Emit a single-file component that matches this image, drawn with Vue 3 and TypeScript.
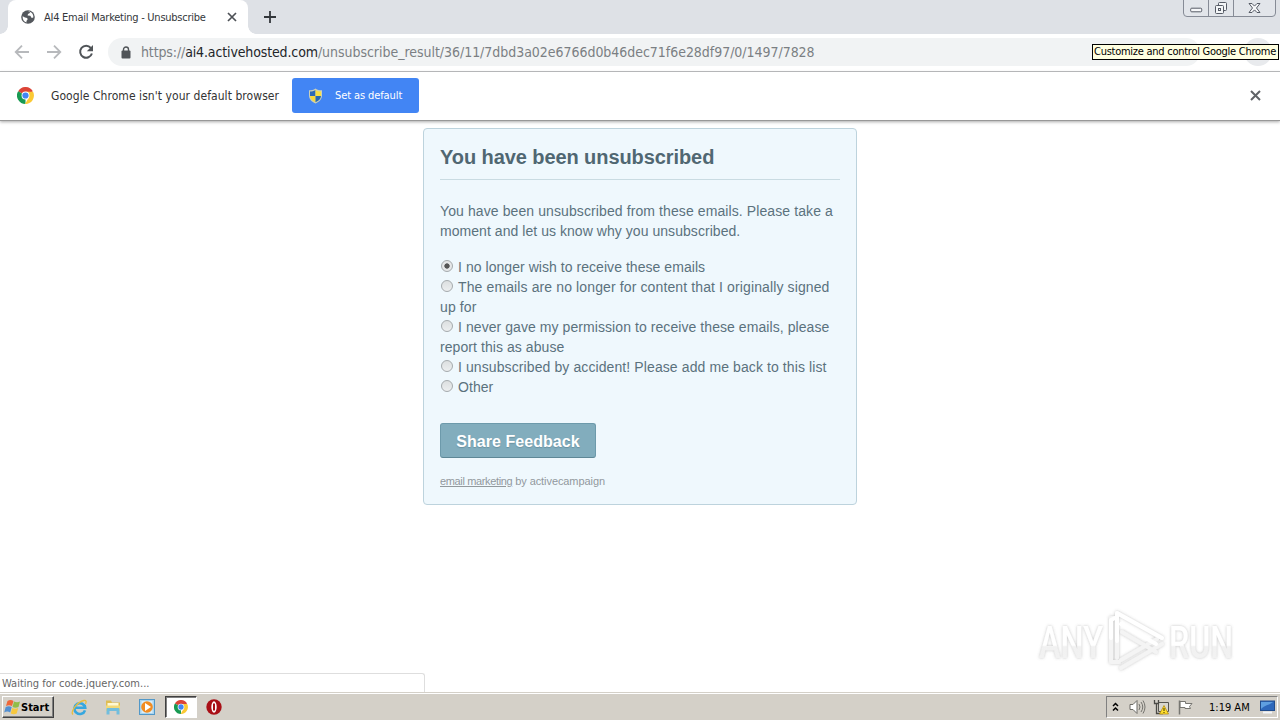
<script setup lang="ts">
import { ref } from 'vue'

interface Reason {
  id: string
  lines: string[]
}

const reasons: Reason[] = [
  { id: 'wish', lines: ['I no longer wish to receive these emails'] },
  { id: 'content', lines: ['The emails are no longer for content that I originally signed', 'up for'] },
  { id: 'permission', lines: ['I never gave my permission to receive these emails, please', 'report this as abuse'] },
  { id: 'accident', lines: ['I unsubscribed by accident! Please add me back to this list'] },
  { id: 'other', lines: ['Other'] },
]

const selected = ref('wish')
</script>

<template>
  <div class="screen">
    <header class="tabstrip">
      <div class="tab">
        <svg class="globe" width="14" height="14" viewBox="0 0 14 14">
          <circle cx="7" cy="7" r="6.8" fill="#54585d" />
          <path d="M1.6 6.2 4 7.4 6.2 8l.4 1.5L5.4 11l.2 1.5C3.1 12 1.4 9.6 1.6 6.2zM6 1.6h3L8.8 3 7 4 6.6 5.6l2.7.1L10.7 8l1.6-.4C12.8 4.3 10.3 1.3 6 1.6z" fill="#fff" />
        </svg>
        <span class="tab-title">AI4 Email Marketing - Unsubscribe</span>
        <svg class="tab-close" width="10" height="10" viewBox="0 0 10 10"><path d="M1 1l8 8M9 1L1 9" stroke="#4d5156" stroke-width="1.7" /></svg>
      </div>
      <svg class="new-tab" width="12" height="12" viewBox="0 0 12 12"><path d="M6 0v12M0 6h12" stroke="#33373b" stroke-width="1.8" /></svg>
      <div class="window-controls">
        <span class="control small">
          <svg width="13" height="6" viewBox="0 0 13 6"><rect x=".7" y="1.2" width="11" height="3.6" rx="1" fill="#f6f7f9" stroke="#565b66" /></svg>
        </span>
        <span class="control small">
          <svg width="14" height="14" viewBox="0 0 14 14" fill="#f3f5f7" stroke="#565b66"><rect x="4.5" y="1.5" width="8" height="8" rx="1" /><rect x="1.5" y="4.5" width="8" height="8" rx="1" /><rect x="4.5" y="7.5" width="2" height="2" /></svg>
        </span>
        <span class="control wide">
          <svg width="13" height="12" viewBox="0 0 13 12"><path d="M1 1.5h3l2.5 2.6L9 1.5h3L8.5 6l3.5 4.5H9L6.5 7.9 4 10.5H1L4.5 6z" fill="#f6f7f9" stroke="#565b66" /></svg>
        </span>
      </div>
    </header>

    <div class="toolbar">
      <svg class="nav back" width="16" height="16" viewBox="0 0 16 16" fill="none" stroke="#b7b9bc" stroke-width="1.8"><path d="M15 8H2M8 1.7 1.7 8 8 14.3" /></svg>
      <svg class="nav forward" width="16" height="16" viewBox="0 0 16 16" fill="none" stroke="#b7b9bc" stroke-width="1.8"><path d="M1 8h13M8 1.7 14.3 8 8 14.3" /></svg>
      <svg class="nav reload" width="16" height="16" viewBox="0 0 16 16"><path d="M12.8 3.9A6 6 0 1 0 13.9 9.5" fill="none" stroke="#505458" stroke-width="2" /><path d="M15 1v6.2H8.8z" fill="#505458" /></svg>
      <div class="omnibox">
        <svg class="lock" width="10" height="13" viewBox="0 0 10 13"><rect x=".5" y="4.5" width="9" height="8" rx="1" fill="#505458" /><path d="M2.5 5V3.5a2.5 2.5 0 0 1 5 0V5" fill="none" stroke="#505458" stroke-width="1.4" /></svg>
        <span class="url"><span class="scheme">https://</span><span class="host">ai4.activehosted.com</span><span class="path">/unsubscribe_result/36/11/7dbd3a02e6766d0b46dec71f6e28df97/0/1497/7828</span></span>
      </div>
      <span class="avatar"></span>
      <span class="menu-hover"></span>
      <div class="tooltip"><span>Customize and control Google Chrome</span></div>
    </div>

    <div class="infobar">
      <svg class="chrome-logo" width="17" height="17" viewBox="0 0 18 18">
        <path d="M9 9 1.2 4.5A9 9 0 0 1 16.8 4.5z" fill="#dc4437" />
        <path d="M9 9V18A9 9 0 0 1 1.2 4.5z" fill="#189a52" />
        <path d="M9 9V5h8A9 9 0 0 1 8.500 18L12.500 11z" fill="#fbc934" />
        <circle cx="9" cy="9" r="4.2" fill="#fff" /><circle cx="9" cy="9" r="3.3" fill="#4285f4" />
      </svg>
      <span class="info-text">Google Chrome isn't your default browser</span>
      <button class="default-button">
        <svg class="shield" width="15" height="16" viewBox="0 0 15 16">
          <path d="M7.5.5C5.5 2 3.5 2.3 1 2.3v5.2c0 3.5 2.6 6.3 6.5 8 3.9-1.7 6.5-4.5 6.5-8V2.3C11.5 2.3 9.5 2 7.5.5z" fill="#cbd0b9" />
          <path d="M7.5 2v6H2V3.5C4 3.5 5.5 3 7.5 2z" fill="#2d69b6" /><path d="M7.5 2c1.5 1 3.5 1.500 5.500 1.500V8H7.500z" fill="#f8df43" />
          <path d="M7.500 8v6.200C4.200 12.900 2.300 11 2 8z" fill="#f8d83b" /><path d="M7.500 8v6.200c3.300-1.300 5.200-3.200 5.500-6.200z" fill="#2868b1" />
        </svg>
        <span>Set as default</span>
      </button>
      <svg class="info-close" width="11" height="11" viewBox="0 0 11 11"><path d="M1 1l9 9M10 1l-9 9" stroke="#606367" stroke-width="2" /></svg>
    </div>

    <main class="page">
      <section class="card">
        <h1><span>You have been unsubscribed</span></h1>
        <p class="intro"><span class="intro-first">You have been unsubscribed from these emails. Please take a</span><br><span class="intro-second">moment and let us know why you unsubscribed.</span></p>
        <div class="reasons">
          <label v-for="reason in reasons" :key="reason.id" :class="reason.id">
            <input v-model="selected" type="radio" name="reason" :value="reason.id">
            <template v-for="(line, index) in reason.lines" :key="line"><br v-if="index"><span>{{ line }}</span></template>
          </label>
        </div>
        <button class="share"><span>Share Feedback</span></button>
        <div class="credit"><u>email marketing</u> by activecampaign</div>
      </section>

      <div class="watermark">
        <svg width="206" height="70" viewBox="0 0 206 70">
          <defs>
            <linearGradient id="fade" x1="0" y1="0" x2="0" y2="1"><stop offset="0" stop-color="#fff" /><stop offset=".55" stop-color="#fff" /><stop offset=".58" stop-color="#f1f1f1" /><stop offset="1" stop-color="#f3f3f3" /></linearGradient>
            <filter id="glow" x="-10%" y="-20%" width="120%" height="140%"><feDropShadow dx="0" dy="0" stdDeviation="1.5" flood-color="#777" flood-opacity=".45" /></filter>
          </defs>
          <g filter="url(#glow)" fill="url(#fade)">
            <text x="5" y="54" textLength="64" lengthAdjust="spacingAndGlyphs">ANY</text>
            <text x="135" y="54" textLength="64" lengthAdjust="spacingAndGlyphs">RUN</text>
          </g>
          <g fill="none" stroke-width="4" stroke-linejoin="round" stroke-linecap="round">
            <path d="M82 14h-5v44h8M83 54V9l45 25M88 28l34 20M87 64l41-24M87 56l36-21" stroke="#f4f4f4" filter="url(#glow)" />
            <path d="M77 34V16l4-2M83 37V9l45 25M87 20l35 20" stroke="#fff" />
          </g>
        </svg>
      </div>
      <div class="status"><span>Waiting for code.jquery.com...</span></div>
    </main>

    <footer class="taskbar">
      <button class="start">
        <svg width="17" height="16" viewBox="0 0 17 16"><path d="M3.5 2q3-2 6 0L8 7q-3-1.5-6 0z" fill="#ef6739" /><path d="M10 2.5q3 1.5 6 0L14.5 8q-3 1.5-6 0z" fill="#91bd48" /><path d="M1.7 8q3-1.5 6 0L6.200 13.500q-3-2-6 0z" fill="#528fd1" /><path d="M8.200 9q3 1.500 6 0l-1.500 5.500q-3 1.500-6 0z" fill="#f7c83f" /></svg>
        <span>Start</span>
      </button>
      <svg class="app-icon ie" width="17" height="17" viewBox="0 0 17 17"><path d="M14 11.300A5.400 5.400 0 1 1 14.200 8.800H4.500" fill="none" stroke="#36a7df" stroke-width="2.600" /><path d="M2 15.500C-1 13 6 3 13 1.500c2.500-.4 2.500 1.500 1.500 3.500" fill="none" stroke="#e9bd3d" stroke-width="1.300" /></svg>
      <svg class="app-icon folder" width="16" height="16" viewBox="0 0 16 16"><path d="M1 1.500h5l1 2h8V12H1z" fill="#dfbd52" /><path d="M2.500 4h11v4h-11z" fill="#fff8d2" /><path d="M1 6.500h14V12H1z" fill="#f2d978" /><path d="M1.500 15.500V10q0-1 1-1h11q1 0 1 1v5.500h-3V12h-7v3.500z" fill="#72bddd" /></svg>
      <svg class="app-icon player" width="16" height="16" viewBox="0 0 16 16"><rect x=".5" y=".5" width="15" height="15" fill="#a9d4ef" stroke="#5298c8" /><rect x="2.5" y="2" width="11" height="12" fill="#d9edf9" /><circle cx="8" cy="8" r="5.800" fill="#f18c22" /><path d="M6 4v8l6-4z" fill="#fff" /></svg>
      <div class="active-app">
        <svg width="14" height="14" viewBox="0 0 18 18"><path d="M9 9 1.200 4.500A9 9 0 0 1 16.800 4.500z" fill="#dc4437" /><path d="M9 9V18A9 9 0 0 1 1.200 4.500z" fill="#189a52" /><path d="M9 9V5h8A9 9 0 0 1 8.500 18L12.500 11z" fill="#fbc934" /><circle cx="9" cy="9" r="4.300" fill="#fff" /><circle cx="9" cy="9" r="3.400" fill="#4285f4" /></svg>
      </div>
      <svg class="app-icon opera" width="16" height="16" viewBox="0 0 16 16"><circle cx="8" cy="8" r="7.700" fill="#a90f16" /><ellipse cx="8" cy="8" rx="2.700" ry="5.700" fill="#fff" /><path d="M8 4.500v7" stroke="#a90f16" stroke-width="2" /></svg>
      <div class="tray">
        <svg class="chevrons" width="7" height="10" viewBox="0 0 7 10"><path d="M1 4l2.500-2.500L6 4M1 8.500 3.500 6 6 8.500" fill="none" stroke="#000" stroke-width="1.500" /></svg>
        <svg class="speaker" width="17" height="16" viewBox="0 0 17 16"><path d="M1 5.500h3l4-4v13l-4-4H1z" fill="#fff" stroke="#6c6b66" /><path d="M10 5q2 3 0 6M12 3q3.500 5 0 10M14 1.500q4 6.500 0 13" fill="none" stroke="#74736e" /></svg>
        <svg class="network" width="17" height="16" viewBox="0 0 17 16"><path d="M5.500 3.500h10v9h-10z" fill="#d8d6cf" stroke="#55544f" /><path d="M1.500 1v3.500h4V1M3.500 4v10.500H10" fill="none" stroke="#4b4a46" stroke-width="1.300" /><path d="M11 6.500 6.500 15h9z" fill="#ffdf2e" stroke="#ad8100" stroke-width=".7" /><path d="M11 9v3m0 1v1" stroke="#3b3000" /></svg>
        <svg class="flag" width="17" height="16" viewBox="0 0 17 16"><path d="M3 2.500h5.500v2h6.500l-2.500 3 1 2H8v-1H3z" fill="#fff" stroke="#777671" /><path d="M2.500 1.500v14" stroke="#777671" stroke-width="1.500" /></svg>
        <span class="clock">1:19 AM</span>
        <svg class="desktop" width="15" height="14" viewBox="0 0 15 14"><rect x=".5" y="1" width="14" height="9.500" fill="#2e68bb" stroke="#224d8c" /><path d="M1 9V2h12C10 5 5 5 1 9z" fill="#5f9fe0" /><path d="M3 12.500h9" stroke="#f2f5f9" stroke-width="2" /></svg>
      </div>
    </footer>
  </div>
</template>

<style>
body { overflow: hidden; }
</style>

<style scoped>
* { box-sizing: border-box; }
.screen { width: 1280px; height: 720px; display: flex; flex-direction: column; background: #fff; font-family: "DejaVu Sans Condensed", "DejaVu Sans", sans-serif; font-stretch: condensed; white-space: nowrap; overflow: hidden; }
svg { flex-shrink: 0; display: block; }
button { font: inherit; margin: 0; }

.tabstrip { height: 34px; background: #dee1e6; display: flex; flex: none; align-items: flex-start; padding-left: 8px; }
.tab { position: relative; width: 240px; height: 34px; border-radius: 8px 8px 0 0; background: #fff; display: flex; align-items: center; padding-left: 13px; }
.tab::before, .tab::after { content: ""; position: absolute; bottom: 0; width: 8px; height: 8px; }
.tab::before { left: -8px; background: radial-gradient(circle at 0 0, transparent 7.5px, #fff 8px); }
.tab::after { right: -8px; background: radial-gradient(circle at 100% 0, transparent 7.5px, #fff 8px); }
.tab-title { width: 172px; margin-left: 9px; font-size: 11px; color: #34373b; letter-spacing: -.25px; }
.tab-close { margin-left: 11px; }
.new-tab { margin: 11px 0 0 16px; }
.window-controls { margin: -1px 4px 0 auto; height: 18px; display: flex; border: 1px solid #868b96; border-radius: 0 0 4px 4px; background: #e2e5ea; }
.control { display: flex; align-items: center; justify-content: center; border-right: 1px solid #868b96; }
.control.small { width: 25px; }
.control.small:first-child { padding-top: 4px; }
.control.wide { width: 41px; border-right: 0; }

.toolbar { position: relative; height: 38px; flex: none; border-bottom: 1px solid #b7b9bb; display: flex; align-items: center; padding: 0 0 1px 14px; }
.forward, .reload { margin-left: 16px; }
.omnibox { width: 1092px; height: 28px; margin-left: 14px; border-radius: 14px; display: flex; align-items: center; background: #f1f3f4; padding-left: 13px; }
.url { margin-left: 10px; font-size: 14px; line-height: 20px; color: #7b7f83; letter-spacing: -.035px; }
.scheme, .host { letter-spacing: -.13px; }
.host { color: #222529; }
.avatar { width: 16px; height: 16px; margin-left: 18px; border-radius: 50%; background: #6f7378; }
.menu-hover { width: 28px; height: 28px; margin-left: 10px; border-radius: 50%; background: #e8eaed; }
.tooltip { position: absolute; top: 10px; left: 1092px; width: 187px; height: 16px; padding-left: 1px; border: 1px solid #000; background: #ffffe1; color: #000; font-size: 11px; line-height: 14px; letter-spacing: -.26px; }

.infobar { position: relative; height: 49px; flex: none; border-bottom: 1px solid #989898; box-shadow: 0 1px 3px #aaa; display: flex; align-items: center; padding: 0 0 1px 17px; z-index: 1; background: #fff; }
.info-text { width: 241px; margin-left: 17px; font-size: 12px; color: #333; letter-spacing: .06px; }
.default-button { width: 127px; height: 35px; padding: 0 0 0 16px; border: 0; border-radius: 3px; background: #4285f4; color: #fff; display: flex; align-items: center; font-size: 11px; letter-spacing: -.1px; }
.default-button span { margin-left: 12px; }
.info-close { margin: 0 19px 0 auto; }

.page { position: relative; height: 571px; flex: none; padding-top: 7px; background: #fff; }
.card { width: 434px; height: 377px; margin: 0 auto; padding: 16px; background: #eff8fd; border: 1px solid #bdd3dd; border-radius: 4px; font-family: "Liberation Sans", Arial, sans-serif; color: #5b727d; font-size: 14px; line-height: 20px; }
h1 { height: 35px; margin: 0; border-bottom: 1px solid #c9dbe2; font-size: 20px; line-height: 24px; font-weight: 700; color: #506772; letter-spacing: -.08px; }
.intro { margin: 21px 0 16px; }
.intro-first { letter-spacing: .1px; }
.intro-second { letter-spacing: .05px; }
.reasons label { display: block; height: 20px; letter-spacing: .05px; }
.reasons .content, .reasons .permission { height: 40px; }
.reasons .content { letter-spacing: .12px; }
.reasons .permission { letter-spacing: .07px; }
.reasons .accident { letter-spacing: .1px; }
input { appearance: none; width: 12px; height: 12px; margin: 0 5px 0 1px; vertical-align: 0; border: 1px solid #a5aaad; border-radius: 50%; background: linear-gradient(#dcdfe0, #eceeef); }
input:checked { background: radial-gradient(circle, #555 0 2.3px, #e5e7e8 3px); }
.share { display: block; width: 156px; height: 35px; margin-top: 26px; padding: 2px 0 0; border: 1px solid #6d9aab; border-bottom-color: #5e8796; border-radius: 3px; background: #82adbd; color: #fff; font-weight: 700; font-size: 16px; letter-spacing: .05px; text-shadow: 0 1px 1px #6a91a0; }
.credit { margin-top: 13px; color: #92999d; font-size: 11px; letter-spacing: -.08px; }
.credit u { letter-spacing: -.36px; }
.watermark { position: absolute; left: 1034px; top: 483px; }
.watermark text { font: 500 45px "Roboto", sans-serif; }
.status { position: absolute; left: 0; bottom: 0; width: 425px; height: 19px; padding-left: 2px; border: 1px solid #dedede; border-left: 0; border-bottom: 0; border-radius: 0 3px 0 0; background: #fff; color: #666; font-size: 11px; line-height: 19px; }

.taskbar { height: 28px; flex: none; display: flex; align-items: center; background: #d4d0c8; border-top: 1px solid #d4d0c8; box-shadow: inset 0 1px #fff; padding: 1px 2px 0; }
.start { width: 52px; height: 22px; padding: 0 0 0 1px; display: flex; align-items: center; border: 1px solid; border-color: #fff #404040 #404040 #fff; box-shadow: inset -1px -1px #808080; background: #d4d0c8; font-size: 11px; font-weight: 700; color: #000; }
.ie { margin-left: 17px; }
.folder { margin-left: 17px; }
.player { margin-left: 18px; }
.active-app { width: 32px; height: 22px; margin-left: 10px; display: flex; align-items: center; justify-content: center; background: #fff; border: 1px solid; border-color: #404040 #fff #fff #404040; box-shadow: inset 1px 1px #808080; }
.opera { margin-left: 9px; }
.tray { height: 22px; width: 172px; margin-left: auto; border: 1px solid; border-color: #808080 #fff #fff #808080; display: flex; align-items: center; padding-left: 5px; }
.speaker { margin-left: 10px; }
.network { margin-left: 7px; }
.flag { margin-left: 7px; }
.clock { width: 43px; margin-left: 15px; font-size: 11px; color: #000; }
.desktop { margin-left: 8px; }
</style>
